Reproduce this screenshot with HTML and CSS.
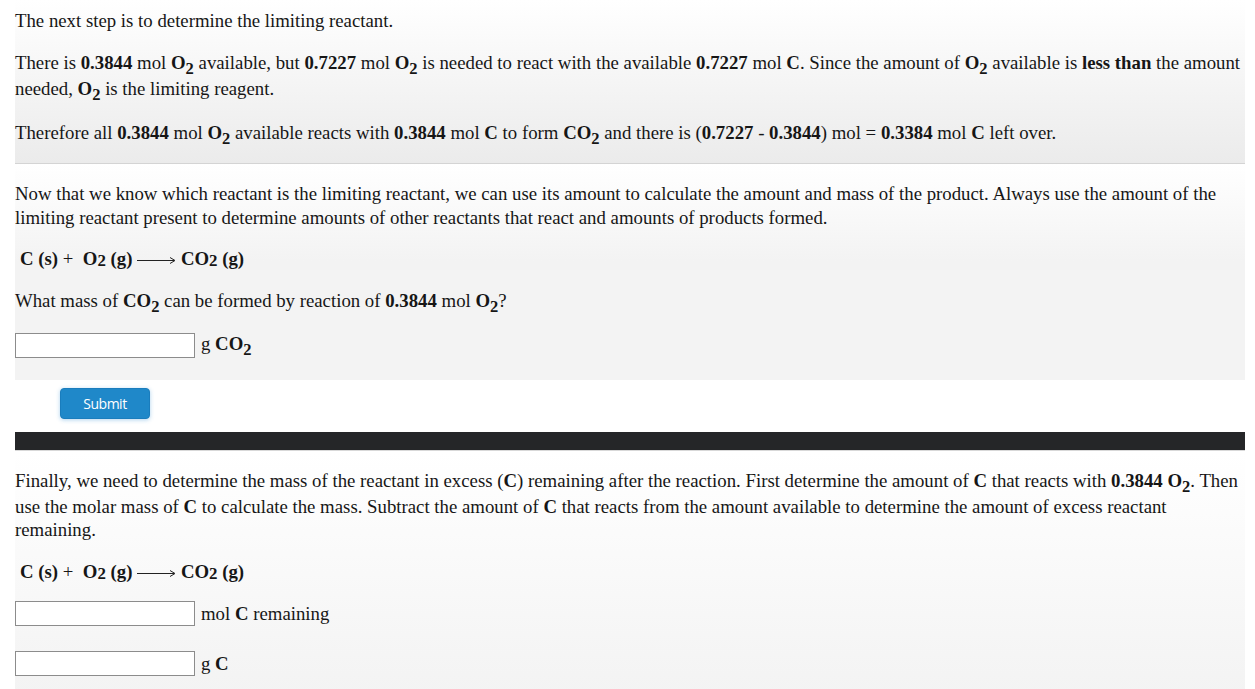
FILE: index.html
```html
<!DOCTYPE html>
<html>
<head>
<meta charset="utf-8">
<link rel="stylesheet" href="styles.css">
</head>
<body>
<div class="page">
  <section class="panel panel-top">
    <p>The next step is to determine the limiting reactant.</p>
    <p>There is <b>0.3844</b> mol <b>O<sub>2</sub></b> available, but <b>0.7227</b> mol <b>O<sub>2</sub></b> is needed to react with the available <b>0.7227</b> mol <b>C</b>. Since the amount of <b>O<sub>2</sub></b> available is <b>less than</b> the amount needed, <b>O<sub>2</sub></b> is the limiting reagent.</p>
    <p>Therefore all <b>0.3844</b> mol <b>O<sub>2</sub></b> available reacts with <b>0.3844</b> mol <b>C</b> to form <b>CO<sub>2</sub></b> and there is (<b>0.7227</b> - <b>0.3844</b>) mol = <b>0.3384</b> mol <b>C</b> left over.</p>
  </section>

  <section class="panel panel-mid">
    <p>Now that we know which reactant is the limiting reactant, we can use its amount to calculate the amount and mass of the product. Always use the amount of the limiting reactant present to determine amounts of other reactants that react and amounts of products formed.</p>
    <p class="eq"><b>C</b> <b>(s)</b> + &nbsp;<b>O<span class="esub">2</span></b> <b>(g)</b> <svg class="arrow" width="39" height="10" viewBox="0 0 39 10"><path d="M0 5.5H37" stroke="#222" stroke-width="1"/><path d="M33 2.5L38 5.5L33 8.5" fill="none" stroke="#222" stroke-width="1"/></svg> <b>CO<span class="esub">2</span></b> <b>(g)</b></p>
    <p>What mass of <b>CO<sub>2</sub></b> can be formed by reaction of <b>0.3844</b> mol <b>O<sub>2</sub></b>?</p>
    <div class="answer"><input type="text" class="box"><span class="unit">g <b>CO<sub>2</sub></b></span></div>
  </section>

  <div class="actions">
    <button class="submit">Submit</button>
  </div>

  <div class="darkbar"></div>

  <section class="panel panel-bottom">
    <p>Finally, we need to determine the mass of the reactant in excess (<b>C</b>) remaining after the reaction. First determine the amount of <b>C</b> that reacts with <b>0.3844</b> <b>O<sub>2</sub></b>. Then use the molar mass of <b>C</b> to calculate the mass. Subtract the amount of <b>C</b> that reacts from the amount available to determine the amount of excess reactant remaining.</p>
    <p class="eq"><b>C</b> <b>(s)</b> + &nbsp;<b>O<span class="esub">2</span></b> <b>(g)</b> <svg class="arrow" width="39" height="10" viewBox="0 0 39 10"><path d="M0 5.5H37" stroke="#222" stroke-width="1"/><path d="M33 2.5L38 5.5L33 8.5" fill="none" stroke="#222" stroke-width="1"/></svg> <b>CO<span class="esub">2</span></b> <b>(g)</b></p>
    <div class="answer"><input type="text" class="box"><span class="unit">mol <b>C</b> remaining</span></div>
    <div class="answer answer-next"><input type="text" class="box"><span class="unit">g <b>C</b></span></div>
  </section>
</div>
</body>
</html>
```

FILE: styles.css
```css
html, body {
  margin: 0;
  padding: 0;
  background: #ffffff;
}

body {
  font-family: "Times New Roman", "Liberation Serif", Times, serif;
  font-size: 18.8px;
  line-height: 23.5px;
  color: #161616;
}

.page {
  padding: 0 10px 0 15px;
}

.panel p {
  margin: 0 0 18px 0;
}

sub {
  font-size: 0.88em;
  line-height: 1;
  vertical-align: -0.28em;
}

.panel-top {
  padding-top: 9px;
  padding-bottom: 0;
  background: linear-gradient(to bottom, #ffffff 0%, #ebebeb 100%);
  border-bottom: 1px solid #d4d4d4;
}

.panel-top p:last-child {
  margin-bottom: 16px;
}

.panel-mid {
  padding-top: 18px;
  padding-bottom: 22px;
  background: linear-gradient(to bottom, #ffffff 0%, #f3f3f3 45%, #f3f3f3 100%);
}

.eq {
  padding-left: 5px;
}

.esub {
  font-size: 0.9em;
  vertical-align: -0.08em;
  line-height: 0;
}

.arrow {
  vertical-align: 0px;
}

.answer {
  display: flex;
  align-items: center;
  gap: 6px;
  height: 25px;
  margin-top: 3px;
}

.answer-next {
  margin-top: 25px;
}

.box {
  box-sizing: border-box;
  width: 180px;
  height: 25px;
  margin: 0;
  border: 1px solid #8c8c8c;
  background: #ffffff;
  padding: 0 4px;
  font-family: "Times New Roman", "Liberation Serif", Times, serif;
}

.unit {
  line-height: 24px;
}

.actions {
  padding: 8px 0 0 45px;
  height: 52px;
  box-sizing: border-box;
}

.submit {
  width: 90px;
  height: 31px;
  border: 1px solid #1a7dbd;
  border-radius: 4px;
  background: #1f88c9;
  color: #ffffff;
  font-family: "Open Sans", "DejaVu Sans", sans-serif;
  font-size: 14px;
  letter-spacing: -0.5px;
  box-shadow: 0 1px 4px rgba(80, 160, 220, 0.45);
  padding: 0;
}

.darkbar {
  height: 18px;
  background: #252628;
  border-bottom: 1px solid #d8d8d8;
}

.panel-bottom {
  padding-top: 18px;
  padding-bottom: 40px;
  background: linear-gradient(to bottom, #ffffff 0%, #f2f2f2 100%);
}
```
